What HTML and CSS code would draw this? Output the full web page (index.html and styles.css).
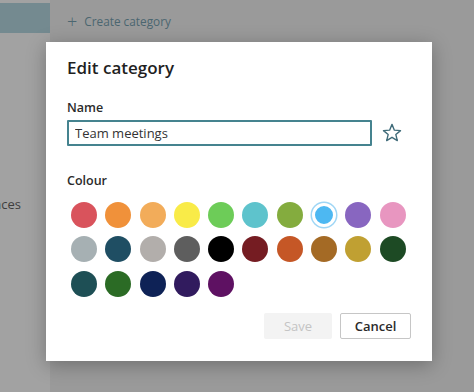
FILE: index.html
```html
<!DOCTYPE html>
<html>
<head>
    <title>Edit category</title>
    <link rel="stylesheet" href="styles.css">
</head>
<body>
    <div class="page">
        <div class="sidebar">
            <div class="side-active"></div>
            <div class="side-item">Preferences</div>
        </div>
        <div class="main">
            <div class="toolbar">
                <span class="plus">+</span>
                <span>Create category</span>
            </div>
        </div>
    </div>

    <div class="dialog">
        <h1 class="dialog-title">Edit category</h1>

        <label class="field-label" for="catName">Name</label>
        <div class="name-row">
            <input type="text" id="catName" class="name-input" value="Team meetings">
            <svg class="star" width="22" height="22" viewBox="0 0 24 24">
                <path d="M12 2.6 L14.6 8.9 L21.3 9.4 L16.2 13.7 L17.8 20.3 L12 16.7 L6.2 20.3 L7.8 13.7 L2.7 9.4 L9.4 8.9 Z"
                      fill="none" stroke="#3f6b79" stroke-width="1.5" stroke-linejoin="round"/>
            </svg>
        </div>

        <div class="field-label colour-label">Colour</div>
        <div class="swatches">
            <span class="swatch" style="background:#d9535c"></span>
            <span class="swatch" style="background:#f0913a"></span>
            <span class="swatch" style="background:#f2ac5a"></span>
            <span class="swatch" style="background:#f9eb48"></span>
            <span class="swatch" style="background:#6dcc58"></span>
            <span class="swatch" style="background:#5ec3cc"></span>
            <span class="swatch" style="background:#84ac3e"></span>
            <span class="swatch selected" style="background:#4db8f2"></span>
            <span class="swatch" style="background:#8866c0"></span>
            <span class="swatch" style="background:#e896c0"></span>

            <span class="swatch" style="background:#a6b0b3"></span>
            <span class="swatch" style="background:#1f4e63"></span>
            <span class="swatch" style="background:#b2aeab"></span>
            <span class="swatch" style="background:#5e5e5e"></span>
            <span class="swatch" style="background:#000000"></span>
            <span class="swatch" style="background:#751c22"></span>
            <span class="swatch" style="background:#c55726"></span>
            <span class="swatch" style="background:#a46a25"></span>
            <span class="swatch" style="background:#c0a032"></span>
            <span class="swatch" style="background:#1d4a24"></span>

            <span class="swatch" style="background:#1e4f55"></span>
            <span class="swatch" style="background:#2b6b25"></span>
            <span class="swatch" style="background:#0e2256"></span>
            <span class="swatch" style="background:#311b5e"></span>
            <span class="swatch" style="background:#5e1162"></span>
        </div>

        <div class="actions">
            <button class="btn btn-save" disabled>Save</button>
            <button class="btn btn-cancel">Cancel</button>
        </div>
    </div>
</body>
</html>
```

FILE: styles.css
```css
body {
    margin: 0;
    font-family: "Open Sans", "Noto Sans", sans-serif;
    background: #9a9a9a;
}

.page {
    display: flex;
    width: 474px;
    height: 392px;
    overflow: hidden;
}

.sidebar {
    width: 50px;
    background: #a2a2a2;
    padding-top: 3px;
    overflow: hidden;
}

.side-active {
    height: 30px;
    background: #748a90;
}

.side-item {
    display: flex;
    justify-content: flex-end;
    margin-top: 162px;
    padding-right: 29px;
    font-size: 13px;
    color: #3e3e3e;
    white-space: nowrap;
}

.main {
    flex: 1;
}

.toolbar {
    display: flex;
    align-items: center;
    gap: 7px;
    padding: 11px 0 0 17px;
    font-size: 11.8px;
    color: #4b6670;
}

.plus {
    font-size: 18px;
    font-weight: 300;
    line-height: 20px;
}

.dialog {
    position: absolute;
    left: 46px;
    top: 42px;
    width: 344px;
    height: 285px;
    padding: 12px 21px 22px 21px;
    background: #ffffff;
    box-shadow: 0 4px 18px rgba(0, 0, 0, 0.28);
    display: flex;
    flex-direction: column;
}

.dialog-title {
    margin: 0;
    font-size: 17px;
    font-weight: 600;
    line-height: 28px;
    color: #1f1f1f;
}

.field-label {
    display: block;
    margin-top: 17px;
    font-size: 12.5px;
    font-weight: 600;
    line-height: 18px;
    color: #2b2b2b;
}

.name-row {
    display: flex;
    align-items: center;
    gap: 9px;
    margin-top: 3px;
}

.name-input {
    box-sizing: border-box;
    width: 305px;
    height: 26px;
    padding: 0 6px;
    border: 2px solid #45838f;
    border-radius: 1px;
    font-family: inherit;
    font-size: 13px;
    color: #333333;
    outline: none;
}

.colour-label {
    margin-top: 26px;
}

.swatches {
    display: grid;
    grid-template-columns: repeat(10, 26px);
    column-gap: 8.3px;
    row-gap: 8.3px;
    margin: 12px 0 0 4px;
}

.swatch {
    width: 26px;
    height: 26px;
    border-radius: 50%;
    box-sizing: border-box;
}

.swatch.selected {
    border: 3px solid #ffffff;
    box-shadow: 0 0 0 1.5px #9fd6f5;
    width: 24px;
    height: 24px;
    margin: 1px;
}

.actions {
    margin-top: auto;
    display: flex;
    justify-content: flex-end;
    gap: 8px;
}

.btn {
    height: 26px;
    padding: 0;
    font-family: inherit;
    font-size: 13px;
    border-radius: 2px;
}

.btn-save {
    width: 68px;
    border: none;
    background: #f3f3f3;
    color: #c4c4c4;
}

.btn-cancel {
    width: 71px;
    border: 1px solid #c6c6c6;
    background: #ffffff;
    color: #2a2a2a;
    font-weight: 600;
    cursor: pointer;
}
```
